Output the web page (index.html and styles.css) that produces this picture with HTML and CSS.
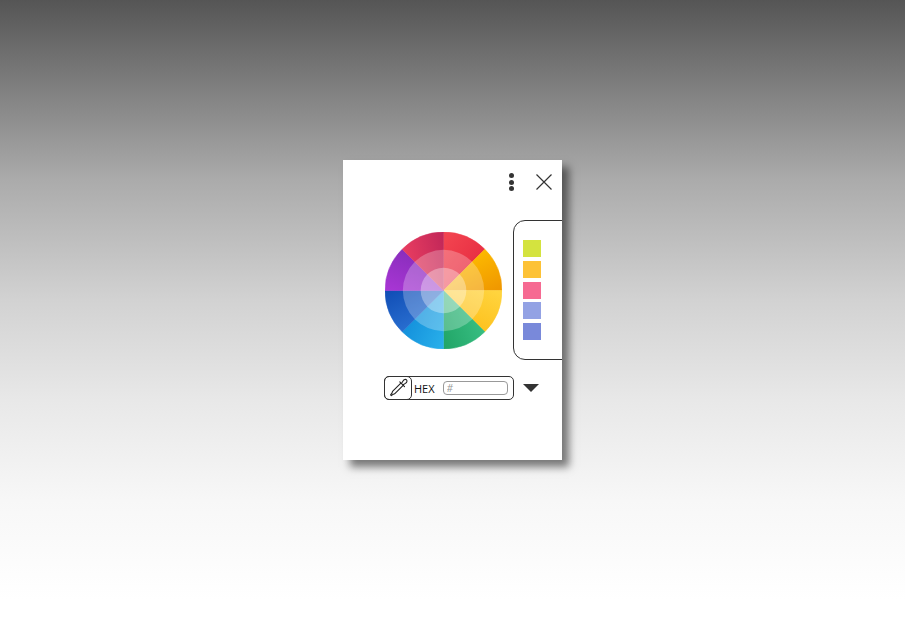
FILE: index.html
```html
<!DOCTYPE html>
<html lang="en">
<head>
  <meta charset="UTF-8">
  <meta name="viewport" content="width=device-width, initial-scale=1.0">
  <link rel="stylesheet" href="styles.css">
  <title>Color Picker</title>
</head>
<body>
  <div class="picker">
    <div class="picker-head">
      <button class="icon-btn kebab" aria-label="More">
        <span></span><span></span><span></span>
      </button>
      <button class="icon-btn close" aria-label="Close">
        <svg width="18" height="18" viewBox="0 0 18 18"><path d="M1.5 1.5L16.5 16.5M16.5 1.5L1.5 16.5" stroke="#333" stroke-width="1.2" fill="none"/></svg>
      </button>
    </div>

    <div class="picker-body">
      <svg class="wheel" width="117" height="117" viewBox="0 0 118 118">
        <defs>
          <linearGradient id="g1" gradientUnits="userSpaceOnUse" x1="59" y1="10" x2="100" y2="40"><stop offset="0" stop-color="#f2434f"/><stop offset="1" stop-color="#e52a40"/></linearGradient>
          <linearGradient id="g2" gradientUnits="userSpaceOnUse" x1="90" y1="20" x2="110" y2="59"><stop offset="0" stop-color="#fdbb00"/><stop offset="1" stop-color="#f09800"/></linearGradient>
          <linearGradient id="g3" gradientUnits="userSpaceOnUse" x1="110" y1="59" x2="90" y2="100"><stop offset="0" stop-color="#ffd43e"/><stop offset="1" stop-color="#fdc01c"/></linearGradient>
          <linearGradient id="g4" gradientUnits="userSpaceOnUse" x1="100" y1="95" x2="59" y2="110"><stop offset="0" stop-color="#38be82"/><stop offset="1" stop-color="#22a668"/></linearGradient>
          <linearGradient id="g5" gradientUnits="userSpaceOnUse" x1="59" y1="115" x2="18" y2="95"><stop offset="0" stop-color="#29b0ea"/><stop offset="1" stop-color="#138fdb"/></linearGradient>
          <linearGradient id="g6" gradientUnits="userSpaceOnUse" x1="5" y1="59" x2="25" y2="100"><stop offset="0" stop-color="#114eb6"/><stop offset="1" stop-color="#2a70d1"/></linearGradient>
          <linearGradient id="g7" gradientUnits="userSpaceOnUse" x1="20" y1="20" x2="5" y2="59"><stop offset="0" stop-color="#8a2ebd"/><stop offset="1" stop-color="#a836d4"/></linearGradient>
          <linearGradient id="g8" gradientUnits="userSpaceOnUse" x1="20" y1="20" x2="59" y2="10"><stop offset="0" stop-color="#e73c60"/><stop offset="1" stop-color="#c32859"/></linearGradient>
        </defs>
        <path fill="url(#g1)" stroke="url(#g1)" stroke-width=".5" d="M59 59V0A59 59 0 0 1 100.7 17.3Z"/>
        <path fill="url(#g2)" stroke="url(#g2)" stroke-width=".5" d="M59 59L100.7 17.3A59 59 0 0 1 118 59Z"/>
        <path fill="url(#g3)" stroke="url(#g3)" stroke-width=".5" d="M59 59H118A59 59 0 0 1 100.7 100.7Z"/>
        <path fill="url(#g4)" stroke="url(#g4)" stroke-width=".5" d="M59 59L100.7 100.7A59 59 0 0 1 59 118Z"/>
        <path fill="url(#g5)" stroke="url(#g5)" stroke-width=".5" d="M59 59V118A59 59 0 0 1 17.3 100.7Z"/>
        <path fill="url(#g6)" stroke="url(#g6)" stroke-width=".5" d="M59 59L17.3 100.7A59 59 0 0 1 0 59Z"/>
        <path fill="url(#g7)" stroke="url(#g7)" stroke-width=".5" d="M59 59H0A59 59 0 0 1 17.3 17.3Z"/>
        <path fill="url(#g8)" stroke="url(#g8)" stroke-width=".5" d="M59 59L17.3 17.3A59 59 0 0 1 59 0Z"/>
        <circle cx="59" cy="59" r="41" fill="#fff" opacity=".25"/>
        <circle cx="59" cy="59" r="23" fill="#fff" opacity=".33"/>
      </svg>

      <div class="swatches">
        <div class="swatch lime"></div>
        <div class="swatch amber"></div>
        <div class="swatch pink"></div>
        <div class="swatch periwinkle"></div>
        <div class="swatch indigo"></div>
      </div>
    </div>

    <div class="picker-foot">
      <div class="hex-field">
        <button class="dropper" aria-label="Pick color">
          <svg width="20" height="20" viewBox="0 0 20 20" fill="none" stroke="#222" stroke-width="1.1" stroke-linejoin="round" stroke-linecap="round">
            <path d="M13.6 5.2L15 3C16 1.4 17.6 1 18.5 1.9C19.4 2.8 19 4.4 17.4 5.4L15.2 6.8"/>
            <path d="M11.8 3.9L16.5 8.6"/>
            <path d="M12.6 5.3L4.8 13.1C4.2 13.7 4.4 14.4 3.9 15.1L2.6 16.9L3.3 17.6L5.1 16.3C5.8 15.8 6.5 16 7.1 15.4L14.9 7.6"/>
          </svg>
        </button>
        <label class="hex-label" for="hex">HEX</label>
        <input class="hex-input" id="hex" type="text" placeholder="#">
      </div>
      <span class="arrow"></span>
    </div>
  </div>
</body>
</html>
```

FILE: styles.css
```css
*{
  margin: 0;
  padding: 0;
  box-sizing: border-box;
}

html, body{
  height: 100%;
}

body{
  display: flex;
  justify-content: center;
  padding: 160px 0 0 0;
  background: linear-gradient(to bottom, #555 0, #858585 100px, #ababab 180px, #d2d2d2 300px, #e8e8e8 400px, #f7f7f7 500px, #fff 600px);
  font-family: "Open Sans", sans-serif;
}

.picker{
  width: 219px;
  height: 300px;
  background-color: white;
  box-shadow: 7px 7px 8px rgba(0, 0, 0, 0.5);
  overflow: hidden;
}

.picker-head{
  display: flex;
  justify-content: flex-end;
  align-items: center;
  gap: 21px;
  height: 44px;
  padding: 0 9px 0 0;
}

.icon-btn{
  display: flex;
  border: none;
  background: none;
}

.kebab{
  flex-direction: column;
  gap: 1.6px;
  width: 5px;
}

.kebab span{
  width: 5px;
  height: 5px;
  border-radius: 50%;
  background-color: #333;
}

.picker-body{
  display: flex;
  align-items: center;
  height: 140px;
  margin: 16px 0 0 0;
  padding: 0 0 0 42px;
  gap: 11px;
}

.wheel{
  flex: none;
}

.swatches{
  display: flex;
  flex-direction: column;
  gap: 3.75px;
  flex: none;
  width: 70px;
  height: 140px;
  padding: 19px 0 0 9px;
  border: 1px solid #333;
  border-radius: 12px;
}

.swatch{
  width: 18px;
  height: 17px;
}

.lime{ background-color: #d4e33f; }
.amber{ background-color: #fdc236; }
.pink{ background-color: #f66a92; }
.periwinkle{ background-color: #93a2e4; }
.indigo{ background-color: #7989da; }

.picker-foot{
  display: flex;
  align-items: center;
  gap: 9px;
  margin: 16px 0 0 41px;
}

.hex-field{
  display: flex;
  align-items: center;
  width: 130px;
  height: 24px;
  border: 1px solid #333;
  border-radius: 5px;
}

.dropper{
  display: flex;
  align-items: center;
  justify-content: center;
  flex: none;
  width: 28px;
  height: 24px;
  margin: 0 0 0 -1px;
  background: none;
  border: 1px solid #333;
  border-radius: 5px;
}

.hex-label{
  margin: 0 0 0 2px;
  font-size: 11px;
  color: #111;
}

.hex-input{
  width: 65px;
  height: 14px;
  margin: 0 0 0 8px;
  padding: 0 3px;
  border: 1px solid #999;
  border-radius: 4px;
  outline: none;
  font-family: "Open Sans", sans-serif;
  font-size: 10px;
}

.hex-input::placeholder{
  color: #999;
  font-style: italic;
}

.arrow{
  width: 0;
  height: 0;
  border-left: 8px solid transparent;
  border-right: 8px solid transparent;
  border-top: 8px solid #333;
}
```
